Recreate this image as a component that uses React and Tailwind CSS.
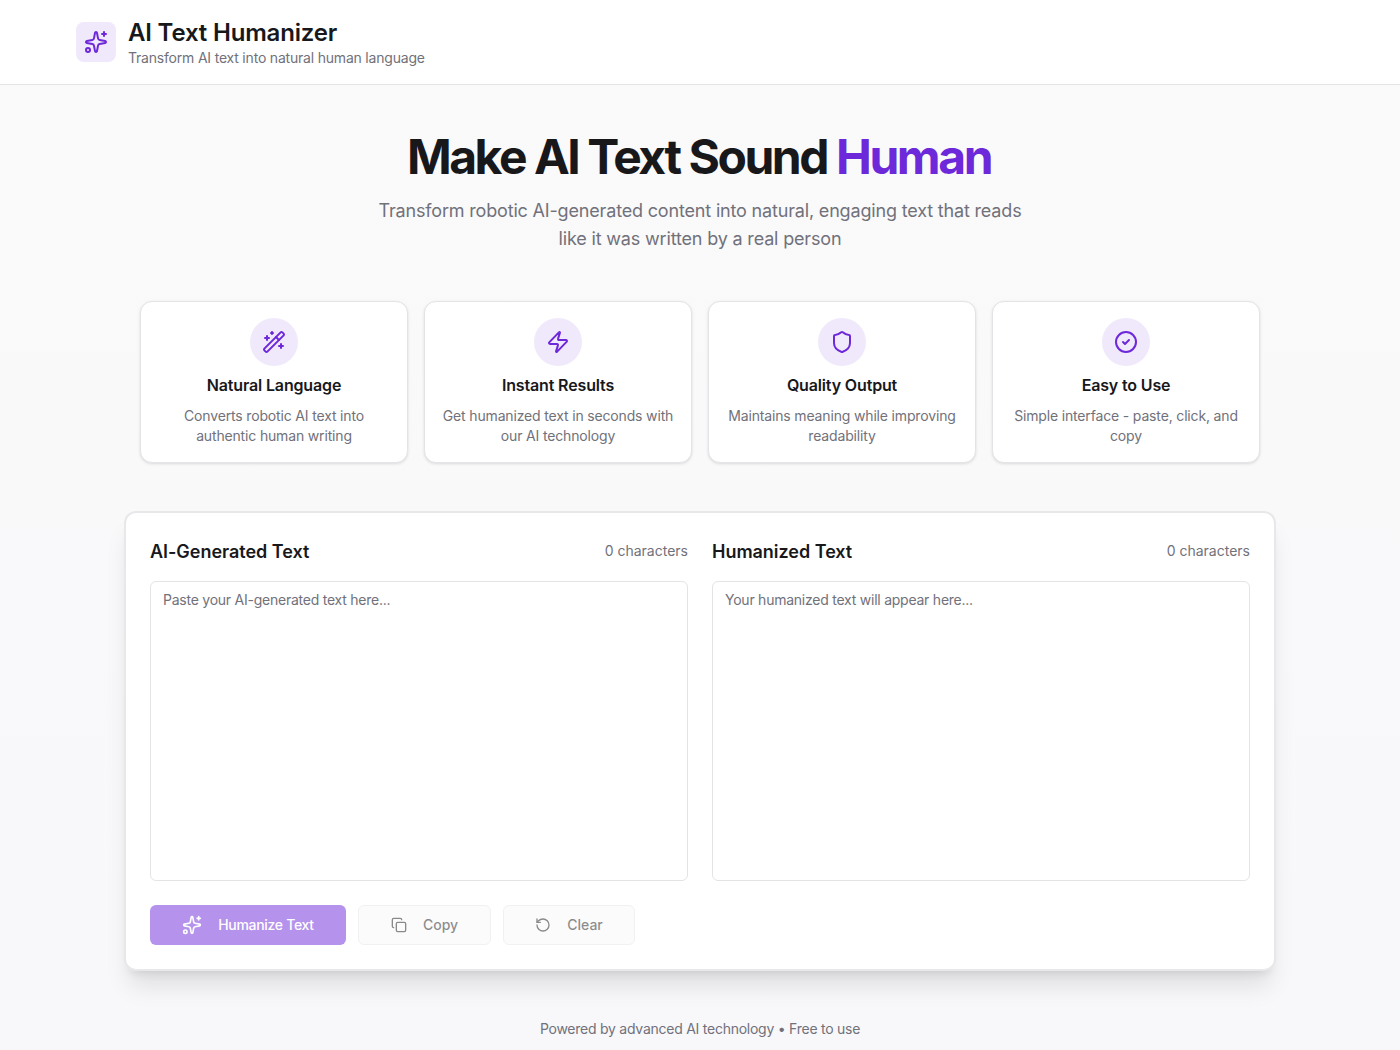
import { Sparkles, WandSparkles, Zap, Shield, CircleCheck, Copy, RotateCcw } from "lucide-react";

const font = "font-['Inter','Noto_Sans',sans-serif]";

const features = [
  { icon: WandSparkles, title: "Natural Language", text: "Converts robotic AI text into authentic human writing" },
  { icon: Zap, title: "Instant Results", text: "Get humanized text in seconds with our AI technology" },
  { icon: Shield, title: "Quality Output", text: "Maintains meaning while improving readability" },
  { icon: CircleCheck, title: "Easy to Use", text: "Simple interface - paste, click, and copy" },
];

function Panel({ title, placeholder }) {
  return (
    <div className="flex flex-col">
      <div className="flex items-center justify-between h-[28px] mb-[16px]">
        <h2 className="pt-[1px] text-[18px] leading-[28px] font-semibold tracking-[-0.03px] text-[#18181b]">{title}</h2>
        <span className="text-[14px] leading-[20px] text-[#71717a]">0 characters</span>
      </div>
      <textarea
        readOnly
        placeholder={placeholder}
        className="h-[300px] w-full resize-none rounded-[6px] border border-[#e4e4e7] bg-white px-[12px] py-[8px] text-[14px] leading-[20px] tracking-[-0.24px] placeholder:text-[#71717a] outline-none"
      />
    </div>
  );
}

export default function App() {
  return (
    <div className={`min-h-[1050px] bg-gradient-to-b from-[#fafafa] to-[#f8f8fb] ${font}`}>
      <header className="h-[85px] bg-white border-b border-[#e4e4e7]">
        <div className="max-w-7xl mx-auto px-4 h-full flex items-center gap-[12px]">
          <div className="w-10 h-10 rounded-[8px] bg-[#f0e9fb] flex items-center justify-center">
            <Sparkles className="w-6 h-6 text-[#6d28d9]" strokeWidth={2} />
          </div>
          <div>
            <h1 className="pt-[1px] -mb-[1px] text-[24px] leading-[32px] font-semibold tracking-[-0.18px] text-[#18181b]">AI Text Humanizer</h1>
            <p className="text-[14px] leading-[20px] tracking-[-0.2px] text-[#71717a]">Transform AI text into natural human language</p>
          </div>
        </div>
      </header>

      <main className="max-w-6xl mx-auto">
        <section className="pt-[48px] text-center">
          <h2 className="pr-[2px] text-[48px] leading-[48px] font-bold tracking-[-2.45px] text-[#18181b]">
            Make AI Text Sound <span className="text-[#6d28d9]">Human</span>
          </h2>
          <p className="mt-[16px] mx-auto max-w-[672px] text-[18px] leading-[28px] tracking-[-0.17px] text-[#71717a]">
            Transform robotic AI-generated content into natural, engaging text that reads like it was written by a real person
          </p>
        </section>

        <section className="mt-[48px] px-4 grid grid-cols-4 gap-[16px]">
          {features.map(({ icon: Icon, title, text }) => (
            <div key={title} className="h-[162px] rounded-[12px] border border-[#e4e4e7] bg-white px-[12px] pt-[16px] text-center shadow-[0_1px_3px_rgba(0,0,0,0.12)] flex flex-col items-center">
              <div className="w-12 h-12 rounded-full bg-[#f0e9fb] flex items-center justify-center">
                <Icon className="w-6 h-6 text-[#6d28d9]" />
              </div>
              <h3 className="mt-[7px] text-[16px] leading-[24px] font-semibold tracking-[-0.15px] text-[#18181b]">{title}</h3>
              <p className="mt-[9px] text-[14px] leading-[20px] tracking-[-0.16px] text-[#71717a]">{text}</p>
            </div>
          ))}
        </section>

        <section className="mt-[48px] rounded-[12px] border-2 border-[#e8e8eb] bg-white p-[24px] shadow-[0_20px_25px_-5px_rgba(0,0,0,0.1),0_8px_10px_-6px_rgba(0,0,0,0.1)]">
          <div className="grid grid-cols-2 gap-[24px]">
            <Panel title="AI-Generated Text" placeholder="Paste your AI-generated text here..." />
            <Panel title="Humanized Text" placeholder="Your humanized text will appear here..." />
          </div>
          <div className="mt-[24px] flex gap-[12px]">
            <button className="h-[40px] w-[196px] rounded-[6px] bg-[#6d28d9] text-white opacity-50 flex items-center justify-center gap-[16px] text-[14px] tracking-[-0.3px] font-medium">
              <Sparkles className="w-5 h-5" /> <span className="pb-[2px]">Humanize Text</span>
            </button>
            <button className="h-[40px] w-[133px] rounded-[6px] border border-[#e4e4e7] bg-[#f9f9fb] text-[#18181b] opacity-50 flex items-center justify-center gap-[16px] text-[14px] font-medium">
              <Copy className="w-4 h-4" /> <span className="pb-[2px]">Copy</span>
            </button>
            <button className="h-[40px] w-[132px] rounded-[6px] border border-[#e4e4e7] bg-[#f9f9fb] text-[#18181b] opacity-50 flex items-center justify-center gap-[16px] text-[14px] font-medium">
              <RotateCcw className="w-4 h-4" /> <span className="pb-[2px]">Clear</span>
            </button>
          </div>
        </section>

        <footer className="mt-[48px] text-center text-[14px] leading-[20px] tracking-[-0.25px] text-[#71717a]">
          Powered by advanced AI technology • Free to use
        </footer>
      </main>
    </div>
  );
}
